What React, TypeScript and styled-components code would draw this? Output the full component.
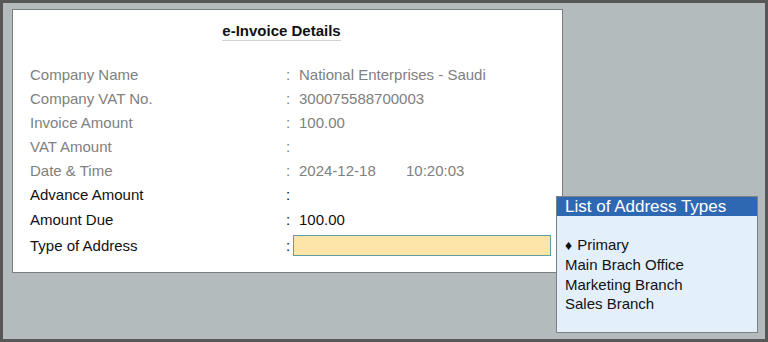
import { Fragment } from 'react';
import styled, { createGlobalStyle } from 'styled-components';

const GlobalStyle = createGlobalStyle`
  html, body {
    margin: 0;
    padding: 0;
    width: 768px;
    height: 342px;
    overflow: hidden;
    font-family: "Liberation Sans", Arial, sans-serif;
  }
`;

const Screen = styled.div`
  position: relative;
  box-sizing: border-box;
  width: 768px;
  height: 342px;
  border: 3px solid #575757;
  background: #b4bbbd;
  padding: 6px 0 0 9px;
`;

const Panel = styled.div`
  box-sizing: border-box;
  width: 551px;
  height: 264px;
  background: #fff;
  border: 1px solid #7b7e80;
  padding: 12px 0 0 17px;
`;

const TitleRow = styled.div`
  display: flex;
  justify-content: center;
  padding-right: 29px;
  margin-bottom: 22px;
`;

const Title = styled.div`
  font-size: 15px;
  font-weight: bold;
  line-height: 18px;
  color: #111;
  border-bottom: 1px solid #d2d2d2;
`;

const Rows = styled.div`
  display: grid;
  grid-template-columns: 256px 7px 258px;
  grid-template-rows: repeat(5, 24px) 25px 26px 24px;
  font-size: 15px;
  line-height: 24px;
`;

const Label = styled.div<{ $muted?: boolean }>`
  color: ${(p) => (p.$muted ? '#808080' : '#111')};
  white-space: nowrap;
`;

const Colon = styled(Label)``;

const Value = styled(Label)`
  padding-left: 6px;
`;

const DateText = styled.span`
  display: inline-block;
  width: 107px;
`;

const InputCell = styled.div`
  display: flex;
  align-items: flex-start;
`;

const Input = styled.div`
  box-sizing: border-box;
  width: 258px;
  height: 21px;
  margin-top: 1px;
  background: #fde4a8;
  border: 1px solid #5e9fa6;
`;

const Popup = styled.div`
  position: absolute;
  left: 553px;
  top: 193px;
  box-sizing: border-box;
  width: 202px;
  height: 137px;
  background: #e3effa;
  border: 1px solid #7d8184;
`;

const PopupHeader = styled.div`
  background: #2f68b2;
  color: #fff;
  font-size: 17px;
  line-height: 19px;
  padding-left: 8px;
  white-space: nowrap;
`;

const PopupList = styled.div`
  padding: 19px 0 0 8px;
  font-size: 15px;
  line-height: 19.4px;
  color: #111;
`;

const Item = styled.div`
  white-space: nowrap;
`;

const Diamond = styled.span`
  font-size: 14px;
  margin-right: 5px;
`;

const rows: { label: string; value?: string; muted: boolean; time?: string }[] = [
  { label: 'Company Name', value: 'National Enterprises - Saudi', muted: true },
  { label: 'Company VAT No.', value: '300075588700003', muted: true },
  { label: 'Invoice Amount', value: '100.00', muted: true },
  { label: 'VAT Amount', muted: true },
  { label: 'Date & Time', value: '2024-12-18', time: '10:20:03', muted: true },
  { label: 'Advance Amount', muted: false },
  { label: 'Amount Due', value: '100.00', muted: false },
];

export default function App() {
  return (
    <>
      <GlobalStyle />
      <Screen>
        <Panel>
          <TitleRow>
            <Title>e-Invoice Details</Title>
          </TitleRow>
          <Rows>
            {rows.map((r) => (
              <Fragment key={r.label}>
                <Label $muted={r.muted}>{r.label}</Label>
                <Colon $muted={r.muted}>:</Colon>
                <Value $muted={r.muted}>
                  {r.time ? (
                    <>
                      <DateText>{r.value}</DateText>
                      {r.time}
                    </>
                  ) : (
                    r.value
                  )}
                </Value>
              </Fragment>
            ))}
            <Label>Type of Address</Label>
            <Colon>:</Colon>
            <InputCell>
              <Input />
            </InputCell>
          </Rows>
        </Panel>
        <Popup>
          <PopupHeader>List of Address Types</PopupHeader>
          <PopupList>
            <Item>
              <Diamond>♦</Diamond>Primary
            </Item>
            <Item>Main Brach Office</Item>
            <Item>Marketing Branch</Item>
            <Item>Sales Branch</Item>
          </PopupList>
        </Popup>
      </Screen>
    </>
  );
}
